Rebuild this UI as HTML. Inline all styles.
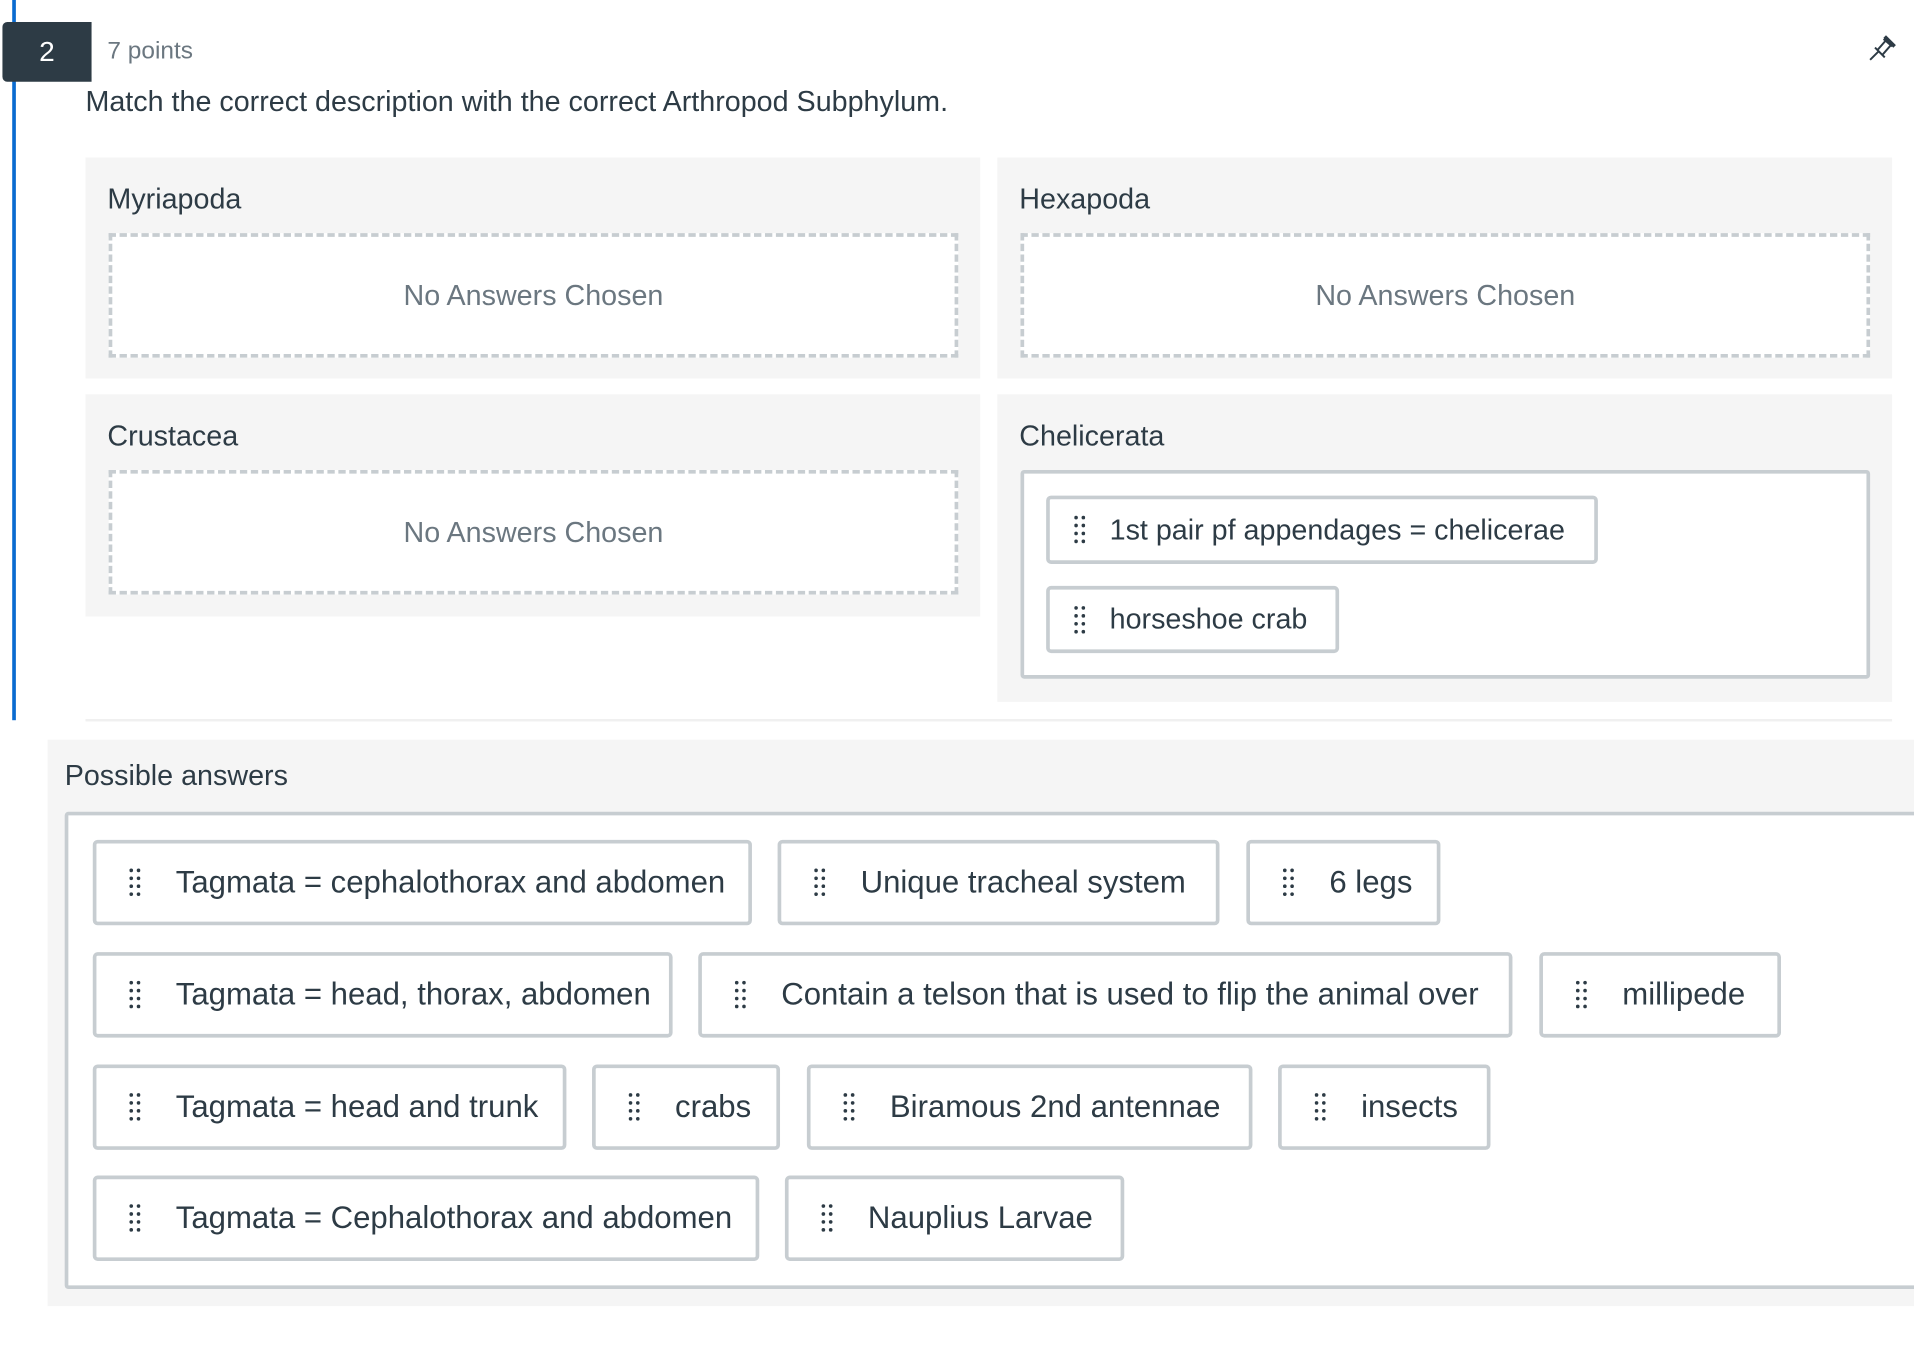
<!DOCTYPE html>
<html><head><meta charset="utf-8"><style>
html,body{margin:0;padding:0;background:#fff;width:1914px;height:1347px;overflow:hidden}
#w{position:absolute;left:0;top:0;width:1568px;height:1104px;transform:scale(1.2207);transform-origin:0 0;font-family:"Liberation Sans",sans-serif;color:#2d3b45}
.a{position:absolute;box-sizing:border-box}
.box{background:#f5f5f5}
.t{font-size:23.5px;white-space:nowrap}
.drop{border:3px dashed #c7cdd1;background:#fff;display:flex;align-items:center;justify-content:center;color:#6b7780;font-size:23.5px}
.chip{border:3px solid #c7cdd1;border-radius:4px;background:#fff;display:flex;align-items:center;white-space:nowrap;font-size:25.5px}
.chip svg{margin:0 29px 0 27px;flex:none}
.c2 svg{margin:0 20px 0 20px}
</style></head><body><div id="w">
<div class="a" style="left:10px;top:0;width:3px;height:590px;background:#0a6bd0"></div>
<div class="a" style="left:2px;top:18px;width:73px;height:49px;background:#2d3b45;border-radius:4px 0 0 4px;color:#fff;font-size:23px;display:flex;align-items:center;justify-content:center">2</div>
<div class="a t" style="left:88px;top:31px;color:#6b7780;font-size:20px">7 points</div>
<svg class="a" style="left:1528px;top:27px" width="28" height="26" viewBox="0 0 28 26" fill="none" stroke="#2d3b45" stroke-width="1.6"><path d="M4 22 L11 15 M8 12 L16 20 M10 14 L17 6 L21 10 L14 18 M15 5 L22 11 M16 4 L23 11 L24 10 L17 3 Z"/></svg>
<div class="a t" style="left:70px;top:70px;font-size:23.5px">Match the correct description with the correct Arthropod Subphylum.</div>

<div class="a box" style="left:70px;top:129px;width:733px;height:181px"></div>
<div class="a t" style="left:88px;top:150px">Myriapoda</div>
<div class="a drop" style="left:89px;top:191px;width:696px;height:102px">No Answers Chosen</div>
<div class="a box" style="left:817px;top:129px;width:733px;height:181px"></div>
<div class="a t" style="left:835px;top:150px">Hexapoda</div>
<div class="a drop" style="left:836px;top:191px;width:696px;height:102px">No Answers Chosen</div>
<div class="a box" style="left:70px;top:323px;width:733px;height:182px"></div>
<div class="a t" style="left:88px;top:344px">Crustacea</div>
<div class="a drop" style="left:89px;top:385px;width:696px;height:102px">No Answers Chosen</div>
<div class="a box" style="left:817px;top:323px;width:733px;height:252px"></div>
<div class="a t" style="left:835px;top:344px">Chelicerata</div>
<div class="a" style="left:836px;top:385px;width:696px;height:171px;border:3px solid #c7cdd1;background:#fff;border-radius:3px"></div>
<div class="a chip c2" style="left:857px;top:406px;width:452px;height:56px;font-size:23.5px">DOTS1st pair pf appendages = chelicerae</div>
<div class="a chip c2" style="left:857px;top:480px;width:240px;height:55px;font-size:23.5px">DOTShorseshoe crab</div>
<div class="a" style="left:70px;top:589px;width:1480px;height:2px;background:#f0f0f0"></div>

<div class="a box" style="left:39px;top:606px;width:1529px;height:464px"></div>
<div class="a t" style="left:53px;top:622px">Possible answers</div>
<div class="a" style="left:53px;top:665px;width:1530px;height:391px;border:3px solid #c7cdd1;background:#fff;border-radius:3px"></div>

<div class="a chip" style="left:76px;top:688px;width:540px;height:70px">DOTSTagmata = cephalothorax and abdomen</div>
<div class="a chip" style="left:637px;top:688px;width:362px;height:70px">DOTSUnique tracheal system</div>
<div class="a chip" style="left:1021px;top:688px;width:159px;height:70px">DOTS6 legs</div>
<div class="a chip" style="left:76px;top:780px;width:475px;height:70px">DOTSTagmata = head, thorax, abdomen</div>
<div class="a chip" style="left:572px;top:780px;width:667px;height:70px">DOTSContain a telson that is used to flip the animal over</div>
<div class="a chip" style="left:1261px;top:780px;width:198px;height:70px">DOTSmillipede</div>
<div class="a chip" style="left:76px;top:872px;width:388px;height:70px">DOTSTagmata = head and trunk</div>
<div class="a chip" style="left:485px;top:872px;width:154px;height:70px">DOTScrabs</div>
<div class="a chip" style="left:661px;top:872px;width:365px;height:70px">DOTSBiramous 2nd antennae</div>
<div class="a chip" style="left:1047px;top:872px;width:174px;height:70px">DOTSinsects</div>
<div class="a chip" style="left:76px;top:963px;width:546px;height:70px">DOTSTagmata = Cephalothorax and abdomen</div>
<div class="a chip" style="left:643px;top:963px;width:278px;height:70px">DOTSNauplius Larvae</div>
</div>
<script>
var d='<svg width="9" height="24" viewBox="0 0 9 24" fill="#2d3b45"><circle cx="1.5" cy="2" r="1.5"/><circle cx="7.5" cy="2" r="1.5"/><circle cx="1.5" cy="8.5" r="1.5"/><circle cx="7.5" cy="8.5" r="1.5"/><circle cx="1.5" cy="15" r="1.5"/><circle cx="7.5" cy="15" r="1.5"/><circle cx="1.5" cy="21.5" r="1.5"/><circle cx="7.5" cy="21.5" r="1.5"/></svg>';
document.querySelectorAll('.chip').forEach(function(e){e.innerHTML=e.innerHTML.replace('DOTS',d)});
</script>
</body></html>
